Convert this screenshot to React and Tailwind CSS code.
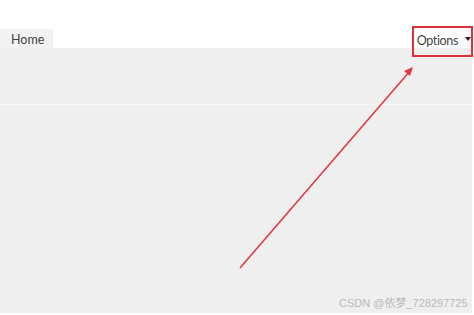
export default function App() {
  return (
    <div className="relative w-[474px] h-[315px] bg-white overflow-hidden" style={{ fontFamily: 'Lato, "Noto Sans", sans-serif' }}>
      <div className="flex flex-col h-full pt-[29px] pb-[2px] pr-[2px]">
        <div className="flex items-end h-[19px]">
          <div className="w-[53px] h-[19px] bg-[#f2f2f2] text-[12.5px] text-[#444] pl-[11px] leading-[21px]">Home</div>
          <div className="flex-1" />
          <div className="flex items-center h-[19px] pt-[3px] gap-[7px] text-[12.5px] tracking-[-0.35px] leading-[15px] text-[#444] pr-[1px]">
            <span>Options</span>
            <span className="w-0 h-0 border-l-[3.5px] border-r-[3.5px] border-t-[4px] border-l-transparent border-r-transparent border-t-[#222] mb-[2px]" />
          </div>
        </div>
        <div className="flex-1 flex flex-col bg-[#efefef]">
          <div className="h-[57px] border-b border-[#fafafa]" />
          <div className="flex-1" />
        </div>
      </div>
      <div className="absolute left-[412px] top-[26px] w-[61px] h-[31px] border-2 border-[#e0303a]" />
      <svg className="absolute left-0 top-0" width="474" height="315" viewBox="0 0 474 315">
        <line x1="240" y1="268" x2="410" y2="71" stroke="#e03a40" strokeWidth="1.6" />
        <polygon points="413,67 404,71 410,76" fill="#e03a40" />
      </svg>
      <div className="absolute left-[339px] top-[296px] text-[11px] text-[#b9b9b9] leading-[14px]" style={{ fontFamily: '"Liberation Sans", "Noto Sans CJK SC", sans-serif' }}>
        CSDN @依梦_728297725
      </div>
    </div>
  );
}
